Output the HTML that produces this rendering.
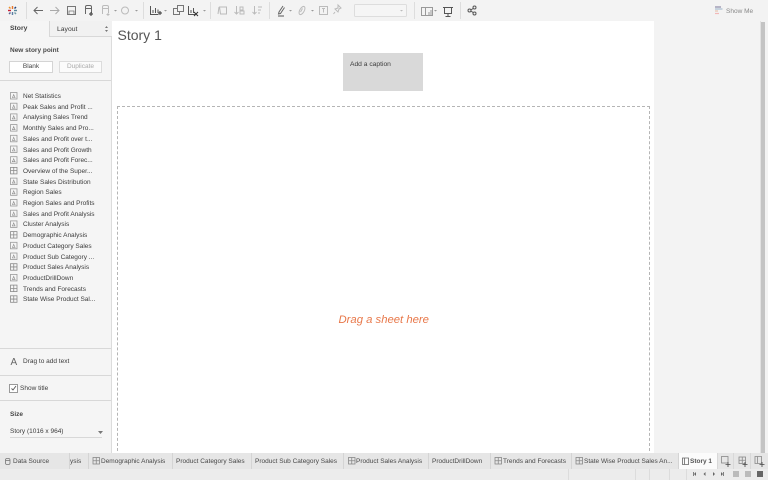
<!DOCTYPE html>
<html><head><meta charset="utf-8"><style>
html,body{margin:0;padding:0}
body{width:768px;height:480px;overflow:hidden;position:relative;background:#f3f3f3;font-family:"Liberation Sans",sans-serif;color:#444;filter:blur(.3px)}
.a{position:absolute;white-space:nowrap}
.t{font-size:6.5px;line-height:10px;color:#3c3c3c;margin-top:1px}
.h{position:absolute;background:#d8d8d8}
.tab{position:absolute;top:453px;height:16px;line-height:18px;font-size:6.5px;color:#484848;white-space:nowrap;background:#e6e6e6;border-right:1px solid #d4d4d4;box-sizing:border-box;overflow:hidden}
svg{position:absolute;overflow:visible}
</style></head><body>
<!-- toolbar -->
<div class="a" style="left:0;top:0;width:768px;height:21px;background:#f3f3f3"></div>
<svg style="left:0;top:0" width="768" height="21" fill="none" stroke="#777" stroke-width="1">
<g stroke-width="1.4"><path d="M12.5 6v3" stroke="#e8762b"/><path d="M12.5 12v3" stroke="#5b7fa6"/><path d="M8 10.500h3" stroke="#c72035"/><path d="M14 10.500h3" stroke="#59879b"/><path d="M9 7l1.500 1.500" stroke="#eb912b"/><path d="M16 7l-1.500 1.500" stroke="#1f447e"/><path d="M9 14l1.500-1.500" stroke="#5c6692"/><path d="M16 14l-1.500-1.500" stroke="#7099a6"/></g>
<g stroke="#ddd"><path d="M26.500 2v17M143.500 2v17M210.500 2v17M269.500 2v17M414.500 2v17M460.500 2v17"/></g>
<path d="M43 10.500H34M37.500 7l-3.500 3.500 3.500 3.500" stroke="#666"/>
<path d="M50 10.500h9M55.500 7l3.500 3.500-3.500 3.500" stroke="#aaa"/>
<rect x="67.500" y="6.500" width="8" height="8"/><path d="M69 14v-3h5v3" stroke-width=".8"/>
<path d="M85.500 14V7a1.500 1.500 0 0 1 1.500-1.500h3A1.500 1.500 0 0 1 91.500 7v6" stroke="#666"/><path d="M85 8.500h7" stroke="#666"/><path d="M91 12v4M89 14h4" stroke="#333"/>
<g stroke="#bbb"><path d="M102.500 14V7a1.500 1.500 0 0 1 1.500-1.500h3A1.500 1.500 0 0 1 108.500 7v6M102 8.500h7M108 13v3M106.500 14.500h3"/><circle cx="125" cy="10.500" r="3.500"/></g>
<g fill="#999" stroke="none"><path d="M114 10h3l-1.500 1.500zM135 10h3l-1.500 1.500zM164 10h3l-1.500 1.500zM203 10h3l-1.500 1.500zM289 10h3l-1.500 1.500zM311 10h3l-1.500 1.500zM434 10h3l-1.500 1.500z"/></g>
<path d="M150.500 6v8.500h8M153 13v-3M155.500 13V8M158 13V9.500" stroke="#555"/><path d="M160 11v4M158 13h4" stroke="#333"/>
<rect x="173.500" y="8.500" width="6" height="6"/><rect x="177.500" y="5.500" width="6" height="6" fill="#f3f3f3"/>
<path d="M188.500 6v8.500h7M191 13v-3M193.500 13V8" stroke="#555"/><path d="M194 12l4 4M198 12l-4 4" stroke="#333"/>
<g stroke="#bbb"><path d="M219.500 7h7v7h-6zM219 7l-1 7"/><path d="M236.500 6v8M234.500 12l2 2 2-2M240 7h3v3h-3zM240 11h4v3h-4z"/><path d="M254.500 6v8M252.500 12l2 2 2-2M258 7h4M258 10h3M258 13h2"/>
<ellipse cx="302" cy="10.500" rx="2.200" ry="4.500" transform="rotate(30 302 10.500)"/><path d="M302.500 8.500l-2 3.500"/><rect x="319.500" y="6.500" width="8" height="8"/><path d="M322 8.500h3M323.500 8.500v4"/><path d="M338 5l3 3-2 1-1 3-3-3 3-1zM335 12l-1.500 2"/></g>
<path d="M283 6l-4 6-.5 2 2-.5 4-6" stroke="#666"/><path d="M278 16h6" stroke="#555"/>
<rect x="354.500" y="4.500" width="52" height="12" rx="1" fill="#f5f5f5" stroke="#ddd"/>
<path d="M400 10h3l-1.500 1.500z" fill="#bbb" stroke="none"/>
<g stroke="#999"><rect x="421.500" y="7.500" width="11" height="8"/><path d="M425.500 7.500v8M429 15v-3M431 15v-5"/></g>
<path d="M443 7.500h10M444.500 7.500v6h7v-6M448 13.500v3M445.500 16.500h5" stroke="#555"/>
<g stroke="#555"><circle cx="469.500" cy="10.500" r="1.500"/><circle cx="474.500" cy="7.500" r="1.500"/><circle cx="474.500" cy="13.500" r="1.500"/><path d="M471 10l2-1.500M471 11l2 1.500"/></g>
<g stroke-width="1.200"><path d="M715 7h6" stroke="#8d8ba8"/><path d="M715 9h7.500" stroke="#a9bdd0"/><path d="M715 11h3" stroke="#e8c4b0"/><path d="M715 13.500h4" stroke="#f2b8b8"/></g>
</svg>
<div class="a" style="left:726px;top:5.500px;font-size:6.500px;line-height:11px;color:#888">Show Me</div>

<!-- sidebar -->
<div class="a" style="left:0;top:21px;width:111px;height:432px;background:#f5f5f5;border-right:1px solid #dcdcdc"></div>
<div class="a" style="left:49px;top:21px;width:63px;height:16px;background:#f1f1f1;border-left:1px solid #d8d8d8;border-bottom:1px solid #d8d8d8;box-sizing:border-box"></div>
<div class="a" style="left:10px;top:24px;font-size:6.800px;line-height:10px;font-weight:bold;color:#444">Story</div>
<div class="a t" style="left:57px;top:23.500px;font-size:6.800px">Layout</div>
<svg style="left:104px;top:26px" width="5" height="6"><path d="M2.500 0l1.500 2H1zM2.500 6L1 4h3z" fill="#777"/></svg>
<div class="a" style="left:10px;top:46px;font-size:6.500px;line-height:10px;font-weight:bold;color:#4a4a4a">New story point</div>
<div class="a" style="left:9px;top:61px;width:44px;height:12px;box-sizing:border-box;background:#fff;border:1px solid #d4d4d4;text-align:center;font-size:6.500px;line-height:10.500px;color:#444">Blank</div>
<div class="a" style="left:59px;top:61px;width:43px;height:12px;box-sizing:border-box;background:#fbfbfb;border:1px solid #dcdcdc;text-align:center;font-size:6.500px;line-height:10.500px;color:#aaa">Duplicate</div>
<div class="h" style="left:0;top:80px;width:111px;height:1px"></div>

<svg style="left:0;top:0" width="0" height="0">
<defs><g id="s" fill="none" stroke="#999" stroke-width=".8"><rect x=".5" y=".5" width="6.500" height="6.500"/><path d="M2.500 5.500l1.200-3 1.200 3M2 5.500h3.500" stroke-width=".6" stroke="#888"/></g><g id="c" fill="none" stroke="#8a8a8a" stroke-width=".8"><rect x=".5" y=".5" width="6.500" height="6.500"/><path d="M3.750.5v6.500M.5 3.750h6.500"/></g></defs>
</svg>
<svg style="left:10px;top:92px" width="10" height="212">
<use href="#s" y="0"/><use href="#s" y="10.700"/><use href="#s" y="21.400"/><use href="#s" y="32.100"/><use href="#s" y="42.800"/><use href="#s" y="53.500"/><use href="#s" y="64.200"/><use href="#c" y="74.900"/><use href="#s" y="85.600"/><use href="#s" y="96.300"/><use href="#s" y="107"/><use href="#s" y="117.700"/><use href="#s" y="128.400"/><use href="#c" y="139.100"/><use href="#s" y="149.800"/><use href="#s" y="160.500"/><use href="#c" y="171.200"/><use href="#s" y="181.900"/><use href="#c" y="192.600"/><use href="#c" y="203.300"/>
</svg>
<div class="a t" style="left:23px;top:91px">Net Statistics</div>
<div class="a t" style="left:23px;top:101.700px">Peak Sales and Profit ...</div>
<div class="a t" style="left:23px;top:112.400px">Analysing Sales Trend</div>
<div class="a t" style="left:23px;top:123.100px">Monthly Sales and Pro...</div>
<div class="a t" style="left:23px;top:133.800px">Sales and Profit over t...</div>
<div class="a t" style="left:23px;top:144.500px">Sales and Profit Growth</div>
<div class="a t" style="left:23px;top:155.200px">Sales and Profit Forec...</div>
<div class="a t" style="left:23px;top:165.900px">Overview of the Super...</div>
<div class="a t" style="left:23px;top:176.600px">State Sales Distribution</div>
<div class="a t" style="left:23px;top:187.300px">Region Sales</div>
<div class="a t" style="left:23px;top:198px">Region Sales and Profits</div>
<div class="a t" style="left:23px;top:208.700px">Sales and Profit Analysis</div>
<div class="a t" style="left:23px;top:219.400px">Cluster Analysis</div>
<div class="a t" style="left:23px;top:230.100px">Demographic Analysis</div>
<div class="a t" style="left:23px;top:240.800px">Product Category Sales</div>
<div class="a t" style="left:23px;top:251.500px">Product Sub Category ...</div>
<div class="a t" style="left:23px;top:262.200px">Product Sales Analysis</div>
<div class="a t" style="left:23px;top:272.900px">ProductDrillDown</div>
<div class="a t" style="left:23px;top:283.600px">Trends and Forecasts</div>
<div class="a t" style="left:23px;top:294.300px">State Wise Product Sal...</div>

<div class="h" style="left:0;top:348px;width:111px;height:1px"></div>
<div class="a" style="left:10.500px;top:356.500px;font-size:10px;line-height:12px;color:#666">A</div>
<div class="a t" style="left:23px;top:356px">Drag to add text</div>
<div class="h" style="left:0;top:375px;width:111px;height:1px"></div>
<svg style="left:9px;top:383.500px" width="10" height="10" fill="none"><rect x=".5" y=".5" width="8" height="8" fill="#fff" stroke="#999"/><path d="M2.500 4.500l1.500 1.500 3-4" stroke="#555" stroke-width=".9"/></svg>
<div class="a t" style="left:20px;top:383px">Show title</div>
<div class="h" style="left:0;top:400px;width:111px;height:1px"></div>
<div class="a" style="left:10px;top:410px;font-size:6.500px;line-height:10px;font-weight:bold;color:#444">Size</div>
<div class="a t" style="left:10px;top:426px">Story (1016 x 964)</div>
<svg style="left:98px;top:430.500px" width="5" height="3"><path d="M0 0h5L2.500 3z" fill="#777"/></svg>
<div class="h" style="left:10px;top:437px;width:92px;height:1px"></div>

<!-- canvas -->
<div class="a" style="left:112px;top:21px;width:542px;height:432px;background:#fff"></div>
<div class="a" style="left:117.500px;top:27px;font-size:14px;line-height:17px;color:#555">Story 1</div>
<div class="a" style="left:343px;top:53px;width:80px;height:38px;background:#d9d9d9"></div>
<div class="a" style="left:350px;top:60px;font-size:6.700px;line-height:10px;color:#3c3c3c">Add a caption</div>
<div class="a" style="left:117px;top:106px;width:533px;height:350px;box-sizing:border-box;border:1px dashed #b5b5b5"></div>
<div class="a" style="left:338.500px;top:312.500px;font-size:11.300px;line-height:14px;font-style:italic;color:#e8784a">Drag a sheet here</div>

<!-- scrollbar -->
<div class="a" style="left:761px;top:22px;width:4px;height:431px;background:#c4c4c4"></div>
<div class="a" style="left:760px;top:21px;width:1px;height:432px;background:#e2e2e2"></div>

<!-- tabs -->
<div class="a" style="left:0;top:453px;width:768px;height:16px;background:#e6e6e6"></div>
<div class="a" style="left:0;top:469px;width:768px;height:11px;background:#ececec"></div>
<div class="tab" style="left:0;width:70px;padding-left:13px">Data Source</div>
<svg style="left:5px;top:458px" width="6" height="7" fill="none" stroke="#777" stroke-width=".8"><rect x=".5" y=".5" width="4.500" height="6" rx="1.500"/><path d="M.5 2.500h4.500"/></svg>
<div class="tab" style="left:70px;width:19px">ysis</div>
<div class="tab" style="left:89px;width:84px;padding-left:12px">Demographic Analysis</div>
<div class="tab" style="left:173px;width:79px;padding-left:3px">Product Category Sales</div>
<div class="tab" style="left:252px;width:92px;padding-left:3px">Product Sub Category Sales</div>
<div class="tab" style="left:344px;width:85px;padding-left:12px">Product Sales Analysis</div>
<div class="tab" style="left:429px;width:62px;padding-left:3px">ProductDrillDown</div>
<div class="tab" style="left:491px;width:81px;padding-left:12px">Trends and Forecasts</div>
<div class="tab" style="left:572px;width:107px;padding-left:12px">State Wise Product Sales An...</div>
<div class="tab" style="left:679px;width:38px;padding-left:11px;background:#fbfbfb;font-weight:bold;border:0;color:#555">Story 1</div>
<svg style="left:0;top:453px" width="768" height="16" fill="none" stroke="#888" stroke-width=".8">
<defs><g id="g"><rect x=".5" y=".5" width="6.500" height="6.500"/><path d="M3.750.5v6.500M.5 3.750h6.500"/></g></defs>
<use href="#g" x="92.500" y="4"/><use href="#g" x="348" y="4"/><use href="#g" x="494.500" y="4"/><use href="#g" x="575.500" y="4"/>
<path d="M682.500 5h6v6.500h-6zM684.500 5v6.500" stroke="#666"/>
<rect x="721.500" y="3.500" width="6.500" height="6.500"/><path d="M728 9v5M725.500 11.500h5" stroke="#444"/>
<use href="#g" x="738.500" y="3.500"/><path d="M745 9v5M742.500 11.500h5" stroke="#444"/>
<path d="M755 3.500h6.500v7h-6.500zM757.500 3.500v7" /><path d="M762 9v5M759.500 11.500h5" stroke="#444"/>
<path d="M717.500 0v16M733.500 0v16M750.500 0v16" stroke="#d5d5d5"/>
</svg>
<svg style="left:0;top:469px" width="768" height="11" fill="none">
<path d="M568.500 0v11M635.500 0v11M649.500 0v11M669.500 0v11M686.500 0v11" stroke="#dcdcdc"/>
<g fill="#666"><path d="M696 3l-2 2 2 2zM693 3h.8v4H693zM705.500 3l-2 2 2 2zM713 3l2 2-2 2zM721 3l2 2-2 2zM723.200 3h.8v4h-.8z"/></g>
<g fill="#bbb"><rect x="733" y="2" width="6" height="6"/><rect x="745" y="2" width="6" height="6"/></g>
<rect x="757" y="2" width="6" height="6" fill="#666"/>
</svg>
</body></html>
